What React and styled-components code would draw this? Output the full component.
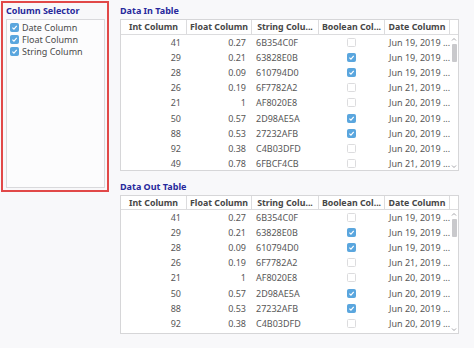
import React from 'react';
import styled, { createGlobalStyle } from 'styled-components';

const rows = [
  [41, '0.27', '6B354C0F', false, 'Jun 19, 2019 ...'],
  [29, '0.21', '63828E0B', true, 'Jun 19, 2019 ...'],
  [28, '0.09', '610794D0', true, 'Jun 19, 2019 ...'],
  [26, '0.19', '6F7782A2', false, 'Jun 21, 2019 ...'],
  [21, '1', 'AF8020E8', false, 'Jun 20, 2019 ...'],
  [50, '0.57', '2D98AE5A', true, 'Jun 20, 2019 ...'],
  [88, '0.53', '27232AFB', true, 'Jun 20, 2019 ...'],
  [92, '0.38', 'C4B03DFD', false, 'Jun 20, 2019 ...'],
  [49, '0.78', '6FBCF4CB', false, 'Jun 21, 2019 ...'],
];

const headers = ['Int Column', 'Float Column', 'String Colu...', 'Boolean Col...', 'Date Column'];
const cols = '66px 65px 67px 66px 65px';

const GlobalStyle = createGlobalStyle`
  body {
    margin: 0;
    background: #f8f8fa;
    font-family: "Noto Sans", "Open Sans", sans-serif;
  }
`;

const Page = styled.div`
  display: flex;
  align-items: flex-start;
  gap: 11px;
  padding: 1px 0 0 1px;
  width: 474px;
  height: 348px;
  box-sizing: border-box;
`;

const SelectorPanel = styled.div`
  width: 108px;
  height: 191px;
  box-sizing: border-box;
  border: 2px solid #e14848;
  display: flex;
  flex-direction: column;
  padding: 1px 2px 2px 3px;
`;

const Title = styled.div`
  font-size: 9px;
  font-weight: 700;
  color: #27299c;
  height: 15px;
  line-height: 13px;
`;

const ListBox = styled.div`
  flex: 1;
  border: 1px solid #d9d9dc;
  background: #fcfcfd;
  padding: 1px 0 0 3px;
  display: flex;
  flex-direction: column;
`;

const ListItem = styled.label`
  display: flex;
  align-items: center;
  gap: 3px;
  height: 12.3px;
  font-size: 9px;
  color: #4a4a4a;
`;

const Box = styled.span`
  width: ${p => p.$size}px;
  height: ${p => p.$size}px;
  border-radius: 1.5px;
  box-sizing: border-box;
  display: inline-flex;
  align-items: center;
  justify-content: center;
  background: ${p => (p.$on ? '#5aa6de' : '#fff')};
  border: 1px solid ${p => (p.$on ? '#5aa6de' : '#dcdcde')};
`;

const Check = ({ on, size = 9 }) => (
  <Box $on={on} $size={size}>
    {on && (
      <svg width={size - 2} height={size - 2} viewBox="0 0 10 10">
        <path d="M2 5.2 L4.2 7.3 L8.2 2.8" fill="none" stroke="#fff" strokeWidth="1.7" />
      </svg>
    )}
  </Box>
);

const Main = styled.div`
  display: flex;
  flex-direction: column;
  width: 339px;
  padding-top: 3px;
`;

const Section = styled.div`
  display: flex;
  flex-direction: column;
  margin-bottom: ${p => p.$gap || 0}px;
`;

const TableFrame = styled.div`
  border: 1px solid #d6d6d8;
  background: #fff;
  height: ${p => p.$h}px;
  box-sizing: border-box;
  display: flex;
  flex-direction: column;
  overflow: hidden;
`;

const HeadRow = styled.div`
  display: grid;
  grid-template-columns: ${cols} 8px;
  height: ${p => p.$h}px;
  border-bottom: 1px solid #dcdcde;
  flex-shrink: 0;
`;

const HeadCell = styled.div`
  font-size: 8.8px;
  font-weight: 700;
  color: #474747;
  display: flex;
  align-items: center;
  justify-content: center;
  border-right: 1px solid #dcdcde;
  white-space: nowrap;
  overflow: hidden;
`;

const Body = styled.div`
  flex: 1;
  display: flex;
  min-height: 0;
`;

const Rows = styled.div`
  flex: 1;
  overflow: hidden;
`;

const Row = styled.div`
  display: grid;
  grid-template-columns: ${cols};
  height: 15.1px;
`;

const Cell = styled.div`
  font-size: 9px;
  color: #575757;
  display: flex;
  align-items: center;
  justify-content: ${p => p.$align || 'flex-start'};
  padding: 0 6px 0 4px;
  white-space: nowrap;
  overflow: hidden;
`;

const Scrollbar = styled.div`
  width: 8px;
  display: flex;
  flex-direction: column;
  align-items: center;
  padding: 2px 0 1px;
  box-sizing: border-box;
`;

const Thumb = styled.div`
  width: 5px;
  height: 18px;
  margin-top: 2px;
  background: #c9c9cc;
  border-radius: 1px;
`;

const Spacer = styled.div`
  flex: 1;
`;

const Arrow = ({ down }) => (
  <svg width="6" height="5" viewBox="0 0 6 5">
    <path d={down ? 'M1 1.5 L3 3.5 L5 1.5' : 'M1 3.5 L3 1.5 L5 3.5'} fill="none" stroke="#9a9a9e" strokeWidth="0.9" />
  </svg>
);

const DataTable = ({ height, headH, count }) => (
  <TableFrame $h={height}>
    <HeadRow $h={headH}>
      {headers.map(h => (
        <HeadCell key={h}>{h}</HeadCell>
      ))}
      <div />
    </HeadRow>
    <Body>
      <Rows>
        {rows.slice(0, count).map(r => (
          <Row key={r[2]}>
            <Cell $align="flex-end">{r[0]}</Cell>
            <Cell $align="flex-end">{r[1]}</Cell>
            <Cell>{r[2]}</Cell>
            <Cell $align="center"><Check on={r[3]} size={9} /></Cell>
            <Cell>{r[4]}</Cell>
          </Row>
        ))}
      </Rows>
      <Scrollbar>
        <Arrow />
        <Thumb />
        <Spacer />
        <Arrow down />
      </Scrollbar>
    </Body>
  </TableFrame>
);

export default function App() {
  return (
    <>
      <GlobalStyle />
      <Page>
        <SelectorPanel>
          <Title>Column Selector</Title>
          <ListBox>
            {['Date Column', 'Float Column', 'String Column'].map(c => (
              <ListItem key={c}>
                <Check on size={9} />
                {c}
              </ListItem>
            ))}
          </ListBox>
        </SelectorPanel>
        <Main>
          <Section $gap={9}>
            <Title>Data In Table</Title>
            <DataTable height={152} headH={14} count={9} />
          </Section>
          <Section>
            <Title>Data Out Table</Title>
            <DataTable height={139} headH={13} count={8} />
          </Section>
        </Main>
      </Page>
    </>
  );
}
